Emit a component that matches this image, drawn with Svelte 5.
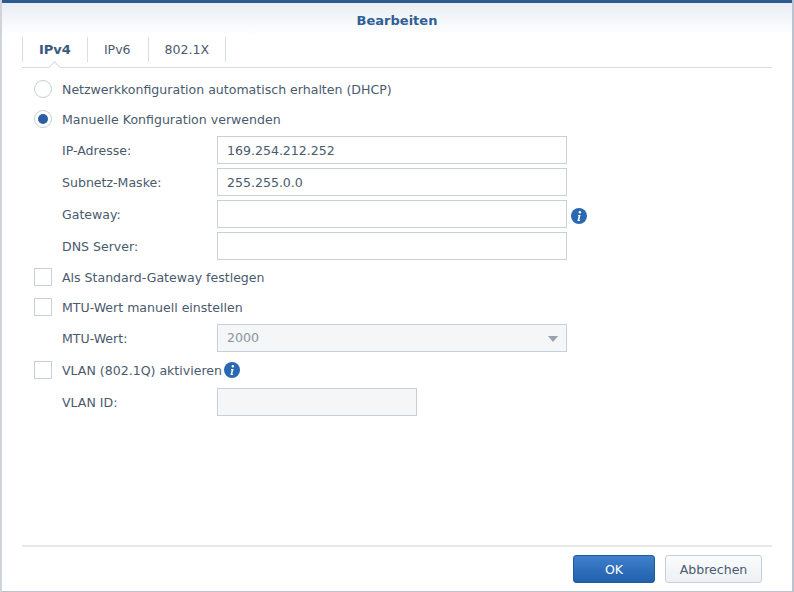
<script>
  let tabs = ['IPv4', 'IPv6', '802.1X'];
  let aktiv = 'IPv4';
</script>

<div class="seite">
  <div class="dialog">
    <header>Bearbeiten</header>

    <div class="inhalt">
      <nav class="tabs">
        {#each tabs as tab}
          <span class="tab" class:aktiv={tab === aktiv}>{tab}</span>
        {/each}
      </nav>

      <div class="formular">
        <div class="option"><span class="radio"></span>Netzwerkkonfiguration automatisch erhalten (DHCP)</div>
        <div class="option"><span class="radio an"></span>Manuelle Konfiguration verwenden</div>

        <div class="felder">
          <div class="zeile"><label for="ip">IP-Adresse:</label><input id="ip" value="169.254.212.252" /></div>
          <div class="zeile"><label for="maske">Subnetz-Maske:</label><input id="maske" value="255.255.0.0" /></div>
          <div class="zeile">
            <label for="gw">Gateway:</label><input id="gw" />
            <svg class="info rechts" viewBox="0 0 16 16"><use href="#info-icon" /></svg>
          </div>
          <div class="zeile"><label for="dns">DNS Server:</label><input id="dns" /></div>
        </div>

        <div class="option check"><span class="box"></span>Als Standard-Gateway festlegen</div>
        <div class="option check"><span class="box"></span>MTU-Wert manuell einstellen</div>

        <div class="zeile mtu">
          <span class="label">MTU-Wert:</span>
          <div class="select">2000<span class="pfeil"></span></div>
        </div>

        <div class="option vlan">
          <span class="box"></span>VLAN (802.1Q) aktivieren
          <svg class="info" viewBox="0 0 16 16"><use href="#info-icon" /></svg>
        </div>
        <div class="zeile vlanid">
          <span class="label">VLAN ID:</span>
          <div class="gesperrt"></div>
        </div>
      </div>
    </div>

    <footer>
      <button class="ok">OK</button>
      <button class="abbrechen">Abbrechen</button>
    </footer>
  </div>
</div>

<svg width="0" height="0" class="defs">
  <defs>
    <g id="info-icon">
      <circle cx="8" cy="8" r="8" fill="#2a69b1" />
      <circle cx="8.9" cy="4.3" r="1.2" fill="#fff" />
      <path d="M7.2 7h2.4l-1.3 5h.9l-.2.9H6.4l1.2-5H6.9z" fill="#fff" />
    </g>
  </defs>
</svg>

<style>
  :global(body) {
    margin: 0;
    background: #b9c4d0;
  }
  .defs {
    position: absolute;
  }
  .seite {
    width: 794px;
    height: 592px;
    padding: 0 2px 1px 0;
    border-left: 2px solid #cfd4da;
    box-sizing: border-box;
    overflow: hidden;
    font-family: "DejaVu Sans", sans-serif;
    font-size: 12.55px;
    color: #4a5a6d;
  }
  .dialog {
    height: 591px;
    background: #fff;
    display: flex;
    flex-direction: column;
    border-top: 3px solid #2d5a92;
    box-sizing: border-box;
  }
  header {
    height: 33px;
    line-height: 35px;
    text-align: center;
    font-weight: bold;
    font-size: 13px;
    color: #2e5f96;
    background: linear-gradient(#e9eef4, #ffffff);
  }
  .inhalt {
    flex: 1;
    margin: 0 20px;
    border-bottom: 2px solid #e6e8ea;
  }
  .tabs {
    display: flex;
    height: 28px;
    padding-bottom: 3px;
    border-bottom: 1px solid #d5dbe2;
    box-sizing: content-box;
  }
  .tab {
    height: 25px;
    line-height: 25px;
    padding: 0 17px 0 16px;
    border-right: 1px solid #d5dee7;
    color: #4a5a6d;
    margin-top: 1px;
  }
  .tab:first-child {
    border-left: 1px solid #d5dee7;
    padding: 0 16px;
  }
  .tab:last-child {
    padding: 0 16px;
  }
  .tab.aktiv {
    font-weight: bold;
    font-size: 13px;
    color: #3a5a80;
    position: relative;
  }
  .tab.aktiv::after {
    content: "";
    position: absolute;
    left: 27px;
    bottom: -10px;
    width: 8px;
    height: 8px;
    background: #fff;
    border-left: 1px solid #d5dbe2;
    border-top: 1px solid #d5dbe2;
    transform: rotate(45deg);
  }
  .formular {
    padding: 6px 0 0 12px;
  }
  .option {
    display: flex;
    align-items: center;
    height: 30px;
  }
  .radio {
    width: 16px;
    height: 16px;
    border: 1px solid #c6d0db;
    border-radius: 50%;
    margin-right: 10px;
    position: relative;
    flex: none;
  }
  .radio.an::after {
    content: "";
    position: absolute;
    left: 3px;
    top: 3px;
    width: 10px;
    height: 10px;
    border-radius: 50%;
    background: #2a5fa3;
  }
  .box {
    width: 16px;
    height: 16px;
    border: 1px solid #c6d0db;
    margin-right: 10px;
    flex: none;
  }
  .felder {
    padding-top: 2px;
    margin-bottom: -2px;
  }
  .zeile {
    display: flex;
    align-items: center;
    height: 28px;
    margin-bottom: 4px;
    padding-left: 28px;
  }
  label, .label {
    width: 155px;
    flex: none;
  }
  input {
    width: 350px;
    height: 28px;
    box-sizing: border-box;
    border: 1px solid #c6d0db;
    padding: 0 9px;
    font: inherit;
    color: #4a5a6d;
    outline: none;
  }
  .info {
    width: 16px;
    height: 16px;
    flex: none;
  }
  .info.rechts {
    margin: 3px 0 0 4px;
  }
  .option .info {
    margin-left: 2px;
  }
  .select {
    width: 350px;
    height: 28px;
    box-sizing: border-box;
    border: 1px solid #c6d0db;
    background: #f4f6f8;
    padding-left: 9px;
    line-height: 26px;
    color: #8a949f;
    position: relative;
  }
  .pfeil {
    position: absolute;
    right: 8px;
    top: 11px;
    border-left: 5px solid transparent;
    border-right: 5px solid transparent;
    border-top: 6px solid #98a3ae;
  }
  .mtu {
    margin-top: 2px;
    margin-bottom: 3px;
  }
  .vlan {
    height: 30px;
  }
  .gesperrt {
    width: 200px;
    height: 28px;
    box-sizing: border-box;
    border: 1px solid #c6d0db;
    background: #f4f6f8;
  }
  .vlanid {
    margin-top: 3px;
  }
  footer {
    height: 44px;
    flex: none;
    display: flex;
    justify-content: flex-end;
    align-items: flex-start;
    gap: 10px;
    padding: 8px 30px 0 0;
    box-sizing: border-box;
  }
  button {
    height: 28px;
    font: inherit;
    border-radius: 3px;
    box-sizing: border-box;
    padding: 0;
  }
  .ok {
    width: 82px;
    color: #fff;
    border: 1px solid #1f5aa0;
    background: linear-gradient(#3f7fcb, #2160ab);
  }
  .abbrechen {
    width: 97px;
    color: #4a5a6d;
    border: 1px solid #c6d0db;
    background: linear-gradient(#fafbfc, #edf1f5);
  }
</style>
